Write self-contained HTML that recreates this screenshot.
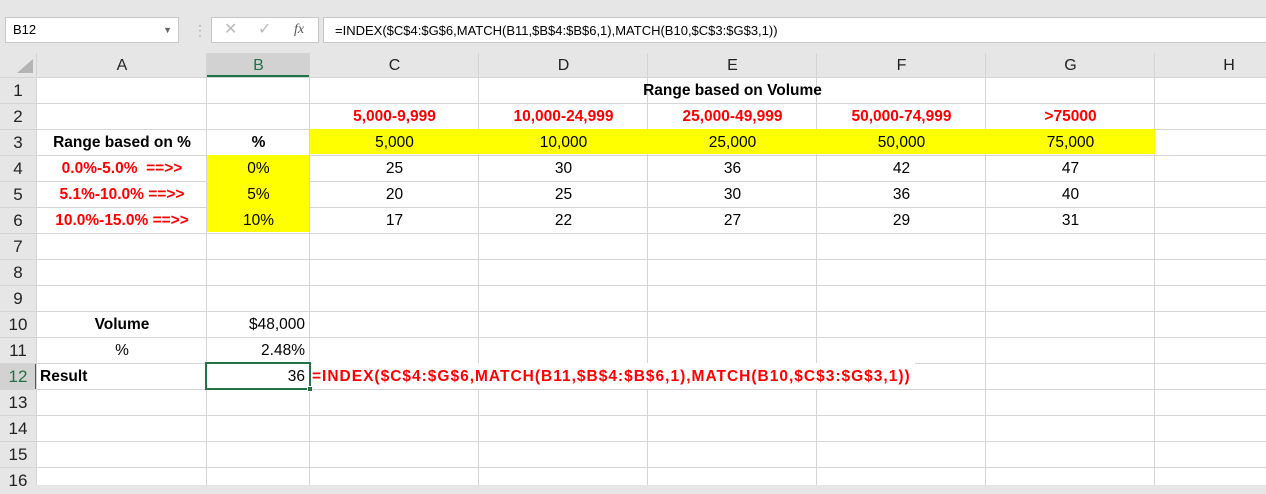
<!DOCTYPE html><html><head><style>
body{margin:0;width:1266px;height:485px;overflow:hidden;background:#e6e6e6;font-family:"Liberation Sans",sans-serif;position:relative}
.a{position:absolute;box-sizing:border-box}
.c{position:absolute;box-sizing:border-box;height:26px;line-height:28px;font-size:15.5px;white-space:nowrap;overflow:visible;font-family:"Liberation Sans",sans-serif}
.h{position:absolute;box-sizing:border-box;font-size:16px;color:#222;text-align:center}
.b{font-weight:bold}.r{color:#f00}.y{background:#ff0}
</style></head><body>
<div class="a" style="left:5px;top:17px;width:174px;height:26px;background:#fff;border:1px solid #c6c6c6;font-size:13px;line-height:24px;padding-left:7px">B12<span style="position:absolute;right:6px;top:0;font-size:9px;color:#666">▼</span></div>
<div class="a" style="left:193px;top:22px;color:#aaa;font-size:14px">⋮</div>
<div class="a" style="left:211px;top:17px;width:108px;height:26px;background:#fff;border:1px solid #c6c6c6;color:#bbb;font-size:16px;line-height:24px"><span style="position:absolute;left:12px">✕</span><span style="position:absolute;left:46px">✓</span><span style="position:absolute;left:82px;color:#555;font-style:italic;font-family:'Liberation Serif';font-size:14px">fx</span></div>
<div class="a" style="left:323px;top:17px;width:950px;height:26px;background:#fff;border:1px solid #c6c6c6;font-size:13px;line-height:26px;padding-left:11px">=INDEX($C$4:$G$6,MATCH(B11,$B$4:$B$6,1),MATCH(B10,$C$3:$G$3,1))</div>
<div class="a" style="left:0;top:53px;width:1266px;height:432px;background:#fff"></div>
<svg class="a" style="left:0;top:53px" width="1266" height="432">
<rect x="0" y="0" width="1266" height="24" fill="#e6e6e6"/><rect x="0" y="0" width="36" height="432" fill="#e6e6e6"/>
<rect x="207" y="0" width="102" height="24" fill="#d2d2d2"/><rect x="207" y="22" width="103" height="2" fill="#217346"/>
<rect x="0" y="310" width="36" height="26" fill="#d2d2d2"/><rect x="35" y="310" width="2" height="26" fill="#217346"/>
<polygon points="33,6 33,20 17,20" fill="#b4b4b4"/>
<g stroke="#d4d4d4" stroke-width="1">
<path d="M36.5 0V432M206.5 0V432M309.5 0V432M478.5 0V432M647.5 0V432M816.5 0V432M985.5 0V432M1154.5 0V432"/>
<path d="M0 24.5H1266M0 50.5H1266M0 76.5H1266M0 102.5H1266M0 128.5H1266M0 154.5H1266M0 180.5H1266M0 206.5H1266M0 232.5H1266M0 258.5H1266M0 284.5H1266M0 310.5H1266M0 336.5H1266M0 362.5H1266M0 388.5H1266M0 414.5H1266"/>
</g></svg>
<div class="a y" style="left:310px;top:129px;width:845px;height:25px"></div>
<div class="a y" style="left:207px;top:155px;width:102px;height:77px"></div>
<div class="a" style="left:205px;top:362px;width:106px;height:28px;border:2px solid #217346"></div>
<div class="a" style="left:307px;top:386px;width:6px;height:6px;background:#217346;border:1px solid #fff"></div>
<div class="h" style="left:37px;top:57px;width:170px">A</div><div class="h" style="left:207px;top:57px;width:103px;color:#217346">B</div>
<div class="h" style="left:310px;top:57px;width:169px">C</div><div class="h" style="left:479px;top:57px;width:169px">D</div>
<div class="h" style="left:648px;top:57px;width:169px">E</div><div class="h" style="left:817px;top:57px;width:169px">F</div>
<div class="h" style="left:986px;top:57px;width:169px">G</div><div class="h" style="left:1155px;top:57px;width:148px">H</div>
<div class="a" style="left:0;top:78px;width:36px;font-size:17px;line-height:26px;text-align:center;color:#222">1<br>2<br>3<br>4<br>5<br>6<br>7<br>8<br>9<br>10<br>11<br><span style="color:#217346">12</span><br>13<br>14<br>15<br>16</div>
<div class="c b" style="left:310px;top:77px;width:845px;text-align:center">Range based on Volume</div>
<div class="c b r" style="left:310px;top:103px;width:169px;text-align:center">5,000-9,999</div>
<div class="c b r" style="left:479px;top:103px;width:169px;text-align:center">10,000-24,999</div>
<div class="c b r" style="left:648px;top:103px;width:169px;text-align:center">25,000-49,999</div>
<div class="c b r" style="left:817px;top:103px;width:169px;text-align:center">50,000-74,999</div>
<div class="c b r" style="left:986px;top:103px;width:169px;text-align:center">&gt;75000</div>
<div class="c b" style="left:37px;top:129px;width:170px;text-align:center">Range based on %</div>
<div class="c b" style="left:207px;top:129px;width:103px;text-align:center">%</div>
<div class="c" style="left:310px;top:129px;width:169px;text-align:center">5,000</div>
<div class="c" style="left:479px;top:129px;width:169px;text-align:center">10,000</div>
<div class="c" style="left:648px;top:129px;width:169px;text-align:center">25,000</div>
<div class="c" style="left:817px;top:129px;width:169px;text-align:center">50,000</div>
<div class="c" style="left:986px;top:129px;width:169px;text-align:center">75,000</div>
<div class="c b r" style="left:37px;top:155px;width:170px;text-align:center">0.0%-5.0% &nbsp;==&gt;&gt;</div>
<div class="c b r" style="left:37px;top:181px;width:170px;text-align:center">5.1%-10.0% ==&gt;&gt;</div>
<div class="c b r" style="left:37px;top:207px;width:170px;text-align:center">10.0%-15.0% ==&gt;&gt;</div>
<div class="c" style="left:207px;top:155px;width:103px;text-align:center">0%</div>
<div class="c" style="left:207px;top:181px;width:103px;text-align:center">5%</div>
<div class="c" style="left:207px;top:207px;width:103px;text-align:center">10%</div>
<div class="c" style="left:310px;top:155px;width:169px;text-align:center">25</div><div class="c" style="left:479px;top:155px;width:169px;text-align:center">30</div><div class="c" style="left:648px;top:155px;width:169px;text-align:center">36</div><div class="c" style="left:817px;top:155px;width:169px;text-align:center">42</div><div class="c" style="left:986px;top:155px;width:169px;text-align:center">47</div>
<div class="c" style="left:310px;top:181px;width:169px;text-align:center">20</div><div class="c" style="left:479px;top:181px;width:169px;text-align:center">25</div><div class="c" style="left:648px;top:181px;width:169px;text-align:center">30</div><div class="c" style="left:817px;top:181px;width:169px;text-align:center">36</div><div class="c" style="left:986px;top:181px;width:169px;text-align:center">40</div>
<div class="c" style="left:310px;top:207px;width:169px;text-align:center">17</div><div class="c" style="left:479px;top:207px;width:169px;text-align:center">22</div><div class="c" style="left:648px;top:207px;width:169px;text-align:center">27</div><div class="c" style="left:817px;top:207px;width:169px;text-align:center">29</div><div class="c" style="left:986px;top:207px;width:169px;text-align:center">31</div>
<div class="c b" style="left:37px;top:311px;width:170px;text-align:center">Volume</div>
<div class="c" style="left:207px;top:311px;width:98px;text-align:right">$48,000</div>
<div class="c" style="left:37px;top:337px;width:170px;text-align:center">%</div>
<div class="c" style="left:207px;top:337px;width:98px;text-align:right">2.48%</div>
<div class="c b" style="left:40px;top:363px">Result</div>
<div class="c" style="left:207px;top:363px;width:98px;text-align:right">36</div>
<div class="c b r" style="left:312px;top:363px;background:#fff;padding-right:4px;letter-spacing:1px">=INDEX($C$4:$G$6,MATCH(B11,$B$4:$B$6,1),MATCH(B10,$C$3:$G$3,1))</div>
</body></html>
